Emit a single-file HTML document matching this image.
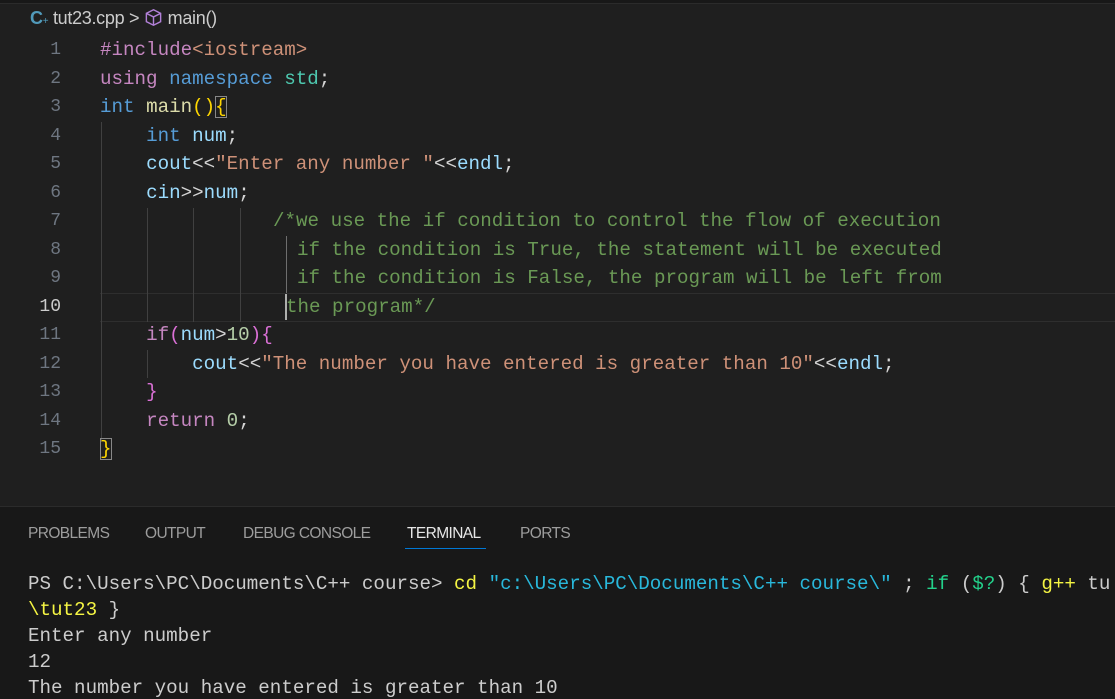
<!DOCTYPE html>
<html><head><meta charset="utf-8"><style>
html,body{margin:0;width:1115px;height:699px;overflow:hidden}
body{background:#1f1f1f;position:relative;font-family:"Liberation Mono",monospace;}
.wrap{position:absolute;left:0;top:0;width:1115px;height:699px;overflow:hidden}
.top{position:absolute;left:0;top:0;width:1115px;height:3px;border-bottom:1px solid #2b2b2b;background:#181818}
.bc{position:absolute;left:30px;top:8px;font-family:"Liberation Sans",sans-serif;font-size:18px;color:#cccccc;letter-spacing:-0.3px;white-space:nowrap}
.ln{position:absolute;left:0;width:61px;text-align:right;color:#6e7681;font-size:18px;height:28px;line-height:28px}
.cl{position:absolute;left:100px;font-size:19.2px;white-space:pre;height:28px;line-height:28px;color:#d4d4d4}
.g{position:absolute;width:1px;background:#404040}
.k{color:#c586c0}.b{color:#569cd6}.t{color:#4ec9b0}.f{color:#dcdcaa}.y{color:#ffd700}.s{color:#ce9178}.v{color:#9cdcfe}.n{color:#b5cea8}.c{color:#6a9955}.p{color:#da70d6}
.panel{position:absolute;left:0;top:506px;width:1115px;height:193px;background:#181818;border-top:1px solid #2b2b2b}
.tab{position:absolute;top:18px;font-family:"Liberation Sans",sans-serif;font-size:15.5px;color:#9d9d9d;letter-spacing:-0.6px}
.tl{position:absolute;left:28px;font-size:19.2px;white-space:pre;color:#cccccc;height:26px;line-height:26px}
</style></head><body><div class="wrap">
<div class="top"></div>
<div class="bc"><span style="color:#519aba;font-weight:bold">C</span><span style="color:#519aba;font-size:10px">+</span> tut23.cpp &gt; <svg width="19" height="19" viewBox="0 0 16 16" style="vertical-align:-3px"><path d="M8 1.5L14 4.5V11.5L8 14.5L2 11.5V4.5Z M2 4.5L8 7.5L14 4.5 M8 7.5V14.5" fill="none" stroke="#b180d7" stroke-width="1.2"/></svg> main()</div>

<div style="position:absolute;left:100px;top:293px;width:1015px;height:27px;border-top:1px solid #2e2e2e;border-bottom:1px solid #2e2e2e"></div>

<div class="g" style="left:101px;top:122px;height:320px"></div>
<div class="g" style="left:147px;top:208px;height:114px"></div>
<div class="g" style="left:193px;top:208px;height:114px"></div>
<div class="g" style="left:240px;top:208px;height:114px"></div>
<div class="g" style="left:147px;top:350px;height:28px"></div>
<div class="g" style="left:286px;top:236px;height:57px;background:#6e6e6e"></div>
<div style="position:absolute;left:285px;top:294px;width:2px;height:26px;background:#aeafad"></div>

<div class="ln" style="top:36px">1</div><div class="cl" style="top:36px"><span class="k">#include</span><span class="s">&lt;iostream&gt;</span></div>
<div class="ln" style="top:65px">2</div><div class="cl" style="top:65px"><span class="k">using</span> <span class="b">namespace</span> <span class="t">std</span>;</div>
<div class="ln" style="top:93px">3</div><div class="cl" style="top:93px"><span class="b">int</span> <span class="f">main</span><span class="y">()</span><span class="y" style="outline:1px solid #888;outline-offset:-1px">{</span></div>
<div class="ln" style="top:122px">4</div><div class="cl" style="top:122px">    <span class="b">int</span> <span class="v">num</span>;</div>
<div class="ln" style="top:150px">5</div><div class="cl" style="top:150px">    <span class="v">cout</span>&lt;&lt;<span class="s">"Enter any number "</span>&lt;&lt;<span class="v">endl</span>;</div>
<div class="ln" style="top:179px">6</div><div class="cl" style="top:179px">    <span class="v">cin</span>&gt;&gt;<span class="v">num</span>;</div>
<div class="ln" style="top:207px">7</div><div class="cl c" style="top:207px;left:273px">/*we use the if condition to control the flow of execution</div>
<div class="ln" style="top:236px">8</div><div class="cl c" style="top:236px;left:297px">if the condition is True, the statement will be executed</div>
<div class="ln" style="top:264px">9</div><div class="cl c" style="top:264px;left:297px">if the condition is False, the program will be left from</div>
<div class="ln" style="top:293px;color:#cccccc">10</div><div class="cl c" style="top:293px;left:286px">the program*/</div>
<div class="ln" style="top:321px">11</div><div class="cl" style="top:321px">    <span class="k">if</span><span class="p">(</span><span class="v">num</span>&gt;<span class="n">10</span><span class="p">){</span></div>
<div class="ln" style="top:350px">12</div><div class="cl" style="top:350px">        <span class="v">cout</span>&lt;&lt;<span class="s">"The number you have entered is greater than 10"</span>&lt;&lt;<span class="v">endl</span>;</div>
<div class="ln" style="top:378px">13</div><div class="cl" style="top:378px">    <span class="p">}</span></div>
<div class="ln" style="top:407px">14</div><div class="cl" style="top:407px">    <span class="k">return</span> <span class="n">0</span>;</div>
<div class="ln" style="top:435px">15</div><div class="cl" style="top:435px"><span class="y" style="outline:1px solid #888;outline-offset:-1px">}</span></div>

<div class="panel">
<div class="tab" style="left:28px">PROBLEMS</div>
<div class="tab" style="left:145px">OUTPUT</div>
<div class="tab" style="left:243px">DEBUG CONSOLE</div>
<div class="tab" style="left:407px;color:#e7e7e7">TERMINAL</div>
<div style="position:absolute;left:405px;top:41px;width:81px;height:1px;background:#0078d4"></div>
<div class="tab" style="left:520px">PORTS</div>
</div>
<div class="tl" style="top:571px">PS C:\Users\PC\Documents\C++ course&gt; <span style="color:#f5f543">cd</span> <span style="color:#29b8db">"c:\Users\PC\Documents\C++ course\"</span> ; <span style="color:#23d18b">if</span> (<span style="color:#23d18b">$?</span>) { <span style="color:#f5f543">g++</span> tu</div>
<div class="tl" style="top:597px"><span style="color:#f5f543">\tut23</span> }</div>
<div class="tl" style="top:623px">Enter any number</div>
<div class="tl" style="top:649px">12</div>
<div class="tl" style="top:675px">The number you have entered is greater than 10</div>
</div></body></html>
